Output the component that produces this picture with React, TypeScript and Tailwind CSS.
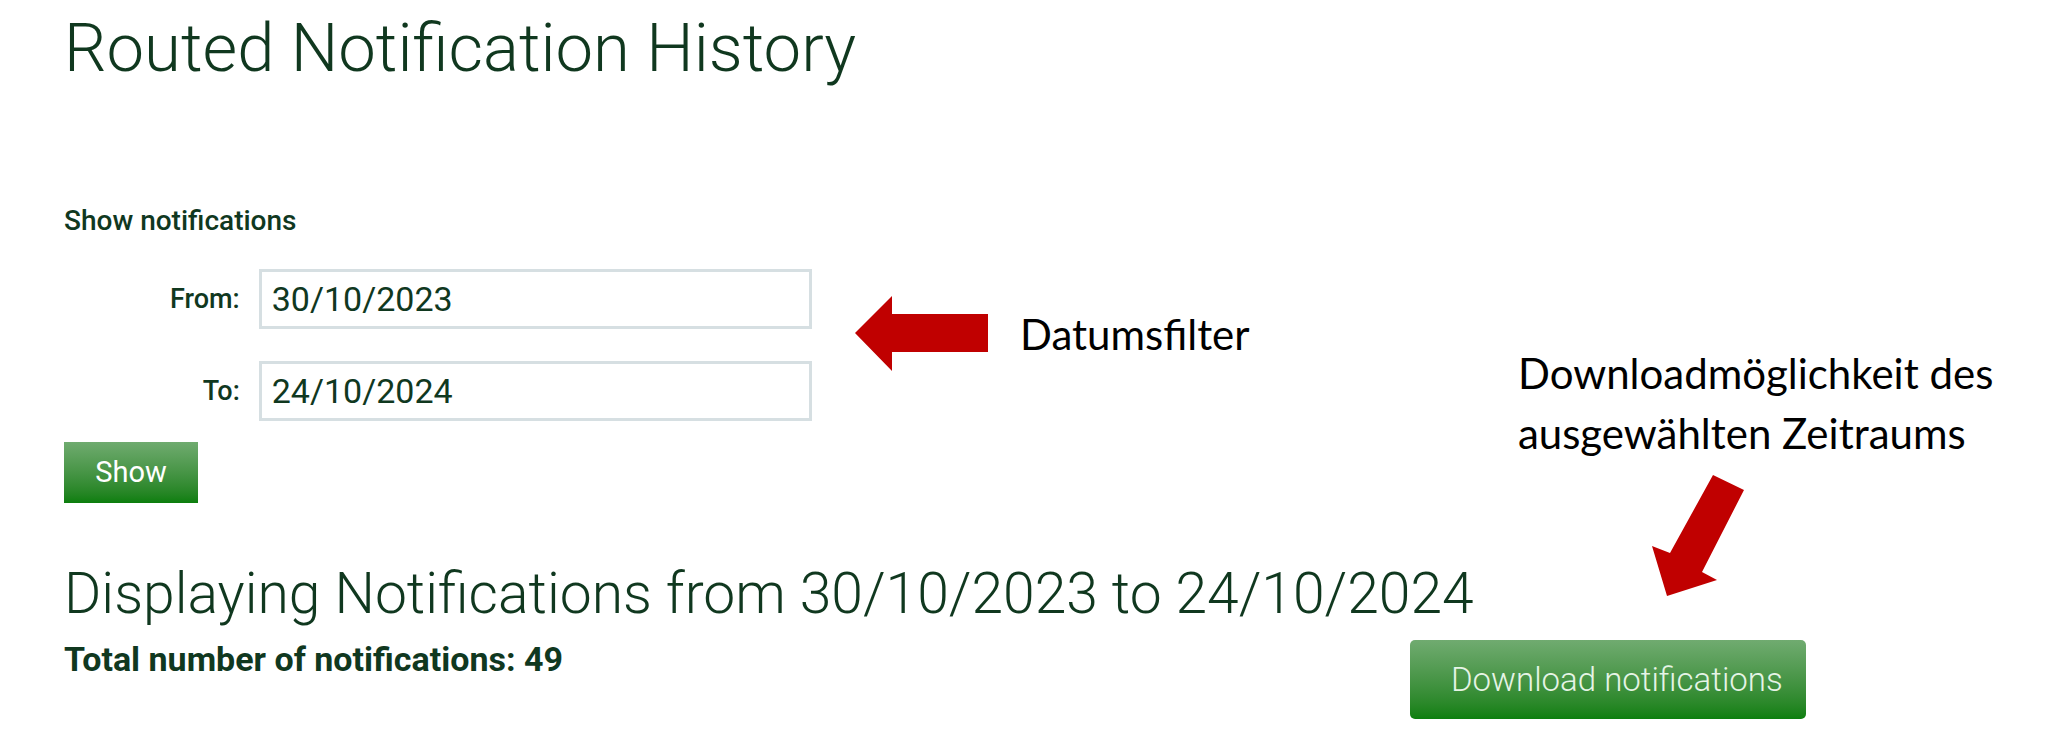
export default function App() {
  return (
    <div className="relative w-[2048px] h-[739px] overflow-hidden bg-white pl-[64px] font-['Roboto',sans-serif] text-[#10381f]">
      {/* page title */}
      <h1 className="pt-[15px] text-[67px] font-light leading-none">Routed Notification History</h1>

      {/* date filter + annotations */}
      <div className="mt-[125px] flex">
        <div className="w-[748px] shrink-0">
          <p className="text-[28px] font-medium leading-none">Show notifications</p>

          <div className="mt-[34px] flex items-center">
            <span className="w-[176px] text-right text-[27px] font-medium leading-none">From:</span>
            <div className="ml-[19px] flex h-[60px] w-[554px] items-center border-[3px] border-[#d6dfe2] pl-[10px] text-[34px] leading-none">
              30/10/2023
            </div>
          </div>

          <div className="mt-[32px] flex items-center">
            <span className="w-[176px] text-right text-[27px] font-medium leading-none">To:</span>
            <div className="ml-[19px] flex h-[60px] w-[554px] items-center border-[3px] border-[#d6dfe2] pl-[10px] text-[34px] leading-none">
              24/10/2024
            </div>
          </div>

          <button className="mt-[21px] flex h-[61px] w-[134px] items-center justify-center bg-gradient-to-b from-[#6fab6f] to-[#0a7e0c] text-[29px] leading-none text-white">
            Show
          </button>
        </div>

        <div className="ml-[43px] mt-[89px] flex items-center self-start">
          <svg width="133" height="75" viewBox="0 0 133 75">
            <polygon points="0,37 37,0 37,18 133,18 133,56 37,56 37,75" fill="#c00000" />
          </svg>
          <span className="ml-[32px] font-['Lato',sans-serif] text-[42px] leading-none text-black">Datumsfilter</span>
        </div>

        <div className="ml-auto mt-[136px] w-[530px] shrink-0 font-['Lato',sans-serif] text-[42px] leading-[60px] text-black">
          <p>Downloadmöglichkeit des</p>
          <p>ausgewählten Zeitraums</p>
        </div>
      </div>

      {/* results */}
      <h2 className="mt-[62px] text-[57px] font-light leading-none">
        Displaying Notifications from 30/10/2023 to 24/10/2024
      </h2>

      <div className="mt-[18px] flex items-start">
        <p className="mt-[2px] w-[1346px] shrink-0 text-[34px] font-bold leading-none">
          Total number of notifications: 49
        </p>
        <button className="flex h-[79px] w-[396px] items-center rounded-[5px] bg-gradient-to-b from-[#70ab70] to-[#0b7f0d] pl-[41px] text-[33px] font-light leading-none text-[#e6f4e6]">
          Download notifications
        </button>
      </div>

      {/* annotation arrow pointing at the download button */}
      <svg className="absolute left-[1652px] top-[475px]" width="92" height="121" viewBox="0 0 92 121">
        <polygon points="61,0 92,15 50,97 65,105 15,121 0,71 18,78" fill="#c00000" />
      </svg>
    </div>
  );
}
